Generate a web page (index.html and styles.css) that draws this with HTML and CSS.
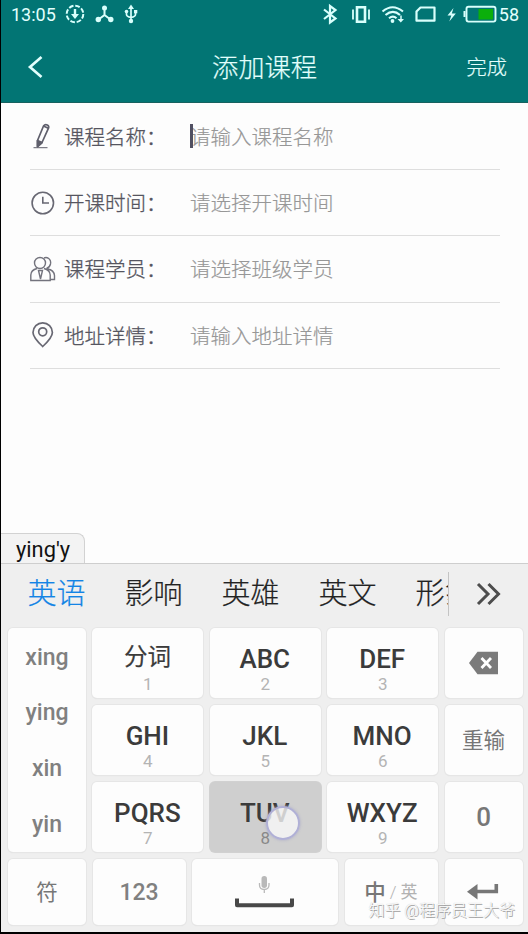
FILE: index.html
```html
<!DOCTYPE html>
<html lang="zh-CN">
<head>
<meta charset="utf-8">
<title>添加课程</title>
<link rel="stylesheet" href="styles.css">
</head>
<body>
<div class="phone">
  <header class="header">
    <div class="status">
      <span class="clock">13:05</span>
      <svg class="status-left" width="80" height="24" viewBox="62 3 80 24" fill="none" stroke="#d9fffc" stroke-width="2">
        <circle cx="75" cy="14" r="8.3" stroke-dasharray="4.7 1.82"/>
        <path d="M75 9v7" stroke-width="2.4"/><path d="M71 14h8l-4 5z" fill="#d9fffc" stroke="none"/>
        <path d="M104.500 8v7l-6 4.500M104.500 15l6 4.500"/>
        <g fill="#d9fffc" stroke="none"><circle cx="104.500" cy="8" r="2.500"/><circle cx="98.300" cy="19.500" r="2.700"/><circle cx="110.800" cy="19.500" r="2.700"/></g>
        <path d="M131 8v13M126.500 12v2.500q0 2 4.500 3q4.500-1 4.500-3V12" stroke-width="1.700"/>
        <g fill="#d9fffc" stroke="none"><path d="M128 9l3-4.500 3 4.500z"/><circle cx="131" cy="21" r="2.200"/><circle cx="126.500" cy="11.500" r="1.800"/><path d="M134 10h3.300v3.300H134z"/></g>
      </svg>
      <svg class="status-right" width="180" height="24" viewBox="320 3 180 24" fill="none" stroke="#d9fffc" stroke-width="2.200">
        <path d="M324 9.500l11.500 9-5.500 4V6l5.500 4-11.500 9"/>
        <path d="M357 7.200h8v14.500h-8z" stroke-width="2.600"/><path d="M353 9.500v10M369 9.500v10" stroke-width="1.800"/>
        <path d="M382.500 11.500q10-8.500 20.500 0M385.500 15q7.500-6.200 14.500 0M389 18.300q4-3.300 7.500 0" stroke-width="2.100"/>
        <circle cx="392.500" cy="21" r="1.900" fill="#d9fffc" stroke="none"/><path d="M401 15.500v4" stroke-width="1.500"/><path d="M397.500 19h6.500l-3.200 3.500z" fill="#d9fffc" stroke="none"/>
        <path d="M420.500 7.500h14v13.200h-18V11.500z" stroke-linejoin="round"/>
        <path d="M453.500 8l-6 7.500h3.800l-2 6 6.500-8h-4z" fill="#d9fffc" stroke="none"/>
        <rect x="466.500" y="6.800" width="29" height="14.800" rx="2" stroke-width="1.900"/><path d="M464.500 11v6" stroke-width="2"/><path d="M478.500 9h14.500v10.500h-14.500z" fill="#0baf0b" stroke="none"/>
      </svg>
      <span class="level">58</span>
    </div>
    <nav class="nav">
      <svg class="back" width="20" height="26" viewBox="0 0 20 26" fill="none" stroke="#e2fffd" stroke-width="2.700"><path d="M15.500 3L4 13l11.500 10"/></svg>
      <h1 class="title">添加课程</h1>
      <span class="done">完成</span>
    </nav>
  </header>

  <main class="form">
    <div class="row">
      <svg class="ico" width="28" height="28" viewBox="0 0 28 28" fill="none" stroke="#5f5f6c" stroke-width="1.700" stroke-linejoin="round"><path d="M8.500 18.500L14.500 4q1.500-2 3.800-1 2 1 1.200 3.200L13 20.500l-4.500 4z"/><path d="M8.500 18.500l4.500 2-4.500 4zM14.500 4l4.800 2.200" fill="#5f5f6c"/><path d="M4.500 25.700h14" stroke-width="1"/></svg>
      <span class="label">课程名称：</span><span class="field active">请输入课程名称</span>
    </div>
    <div class="row">
      <svg class="ico" width="28" height="28" viewBox="0 0 28 28" fill="none" stroke="#686873" stroke-width="1.600"><circle cx="12.800" cy="14" r="10.700"/><path d="M12.800 7.800V14H19"/></svg>
      <span class="label">开课时间：</span><span class="field">请选择开课时间</span>
    </div>
    <div class="row">
      <svg class="ico" width="28" height="28" viewBox="0 0 28 28" fill="none" stroke="#73737d" stroke-width="1.400"><circle cx="10" cy="8" r="5.500"/><path d="M14 3q2-1 4 0 3.300 2 2.500 6-.8 3.500-4 4.500M7 13.500Q1 15 .8 20v5.500h19.400V20q-.2-5-6.200-6.500M17.500 14q6.500 1 7 6.500v4h-4.300"/><path d="M8.500 15.500l2 8.500 2-8.500z"/></svg>
      <span class="label">课程学员：</span><span class="field">请选择班级学员</span>
    </div>
    <div class="row">
      <svg class="ico" width="28" height="28" viewBox="0 0 28 28" fill="none" stroke="#686873" stroke-width="1.700"><path d="M12.700 25.500Q3 16.500 3 11.500a9.700 9.700 0 0 1 19.400 0q0 5-9.700 14z"/><circle cx="12.700" cy="10.800" r="4"/></svg>
      <span class="label">地址详情：</span><span class="field">请输入地址详情</span>
    </div>
  </main>

  <div class="composing">ying'y</div>
  <section class="keyboard">
    <div class="candidates">
      <div class="words"><span class="chosen">英语</span><span>影响</span><span>英雄</span><span>英文</span><span>形象</span></div>
      <svg class="more" width="26" height="24" viewBox="0 0 26 24" fill="none" stroke="#4d4d4d" stroke-width="3"><path d="M2 2l10 10L2 22M12.500 2l10 10-10 10"/></svg>
    </div>
    <div class="keys">
      <div class="key pinyin"><span>xing</span><span>ying</span><span>xin</span><span>yin</span></div>
      <div class="key"><b class="cjk">分词</b><i>1</i></div>
      <div class="key"><b>ABC</b><i>2</i></div>
      <div class="key"><b>DEF</b><i>3</i></div>
      <div class="key side"><svg class="erase" width="30" height="24" viewBox="0 0 30 24"><path d="M0 12L8.500 .8H29v22.400H8.500z" fill="#7b7b7b"/><path d="M12.500 7l9.500 10M22 7l-9.500 10" stroke="#fff" stroke-width="2.800"/></svg></div>
      <div class="key"><b>GHI</b><i>4</i></div>
      <div class="key"><b>JKL</b><i>5</i></div>
      <div class="key"><b>MNO</b><i>6</i></div>
      <div class="key side reset">重输</div>
      <div class="key"><b>PQRS</b><i>7</i></div>
      <div class="key pressed"><b>TUV</b><i>8</i><span class="touch"></span></div>
      <div class="key"><b>WXYZ</b><i>9</i></div>
      <div class="key side zero">0</div>
    </div>
    <div class="bottom">
      <div class="key side symbol">符</div>
      <div class="key side num">123</div>
      <div class="key side"><svg class="space" width="60" height="34" viewBox="0 0 60 34"><rect x="26.500" y="0" width="5.500" height="12" rx="2.700" fill="#b9b9b9"/><path d="M24.500 7v2q0 4.500 4.700 4.500T34 9V7M29.300 13.500V17" fill="none" stroke="#b9b9b9" stroke-width="1.300"/><path d="M2 22.500v6.700h55v-6.700" fill="none" stroke="#484848" stroke-width="4" stroke-linejoin="round"/></svg></div>
      <div class="key side lang">中<span>/ <em>英</em></span></div>
      <div class="key side"><svg class="enter" width="32" height="18" viewBox="0 0 32 18"><path d="M29.300 1v7.500H8" fill="none" stroke="#777" stroke-width="3.600"/><path d="M0 8.700L10.500 1v15.500z" fill="#777"/></svg></div>
    </div>
  </section>
  <div class="watermark">知乎 @程序员王大爷</div>
</div>
</body>
</html>
```
FILE: styles.css
```css
* { box-sizing: border-box; }
body { margin: 0; background: #000; font-family: Roboto, "Noto Sans CJK SC", sans-serif; }
svg { display: block; flex: none; }
.phone { position: relative; width: 528px; height: 934px; border-left: 1px solid #000; border-bottom: 2px solid #000; background: #fdfdfd; display: flex; flex-direction: column; overflow: hidden; }
.header { height: 103px; flex: none; background: #027574; border-bottom: 1px solid #17615f; color: #e2fffd; }
.status { height: 30px; display: flex; align-items: center; padding: 0 9px 0 10px; }
.clock { width: 51px; font-size: 18px; line-height: 20px; padding-bottom: 1px; box-sizing: content-box; }
.status-right { margin-left: 178px; }
.level { font-size: 18px; line-height: 20px; margin-left: -1px; padding-bottom: 1px; }
.nav { height: 75px; display: grid; grid-template-columns: 1fr auto 1fr; align-items: center; padding: 0 21px 0 25px; }
.back { margin-top: -2px; }
.title { margin: 0 0 0 -4px; font-size: 26.300px; font-weight: 300; line-height: 38px; -webkit-text-stroke: .2px; }
.done { justify-self: end; font-size: 20.200px; font-weight: 300; line-height: 30px; -webkit-text-stroke: .2px; }
.form { padding: .7px 28px 0 29px; }
.row { height: 66.3px; border-bottom: 1px solid #dedede; display: flex; align-items: center; }
.ico { width: 28px; margin-right: 6px; }
.row:first-child .ico { transform: translateX(-1px); }
.label { width: 126px; font-size: 20.500px; color: #555560; font-weight: 300; white-space: nowrap; -webkit-text-stroke: .3px; }
.field { font-size: 20.500px; color: #979797; font-weight: 300; white-space: nowrap; -webkit-text-stroke: .2px; }
.label, .field { margin-top: -1px; }
.active { position: relative; }
.active::before { content: ""; position: absolute; left: 0; top: 3px; width: 3px; height: 24px; background: #505062; }
.composing { width: 84px; height: 30px; margin-top: auto; border: 1px solid #d2d2d2; border-left: 0; border-bottom: 0; border-radius: 0 8px 0 0; background: #f3f3f3; color: #111; padding-left: 15px; font-size: 21.800px; line-height: 31px; flex: none; }
.keyboard { height: 369px; flex: none; border-top: 1px solid #cecece; background: #efefef; padding-left: 7px; }
.candidates { height: 63.500px; display: flex; align-items: center; }
.words { width: 441px; height: 44px; border-right: 1px solid #c4c4c4; padding-left: 19.500px; display: flex; gap: 39px; align-items: center; overflow: hidden; white-space: nowrap; font-size: 29px; font-weight: 300; color: #222; line-height: 42px; margin-top: -3px; -webkit-text-stroke: .2px; }
.words span { flex: none; }
.words .chosen { color: #1384e5; }
.more { margin-left: 26.500px; margin-top: -4px; }
.keys { display: grid; grid-template-columns: 78px 111px 111px 111px 78px; grid-template-rows: repeat(3, 70px); gap: 7.300px 6.400px; }
.bottom { display: grid; grid-template-columns: 78px 93px 146px 93.400px 78px; grid-template-rows: 66px; column-gap: 6.550px; margin-top: 7.300px; }
.key { position: relative; display: flex; flex-direction: column; align-items: center; background: #fdfdfd; border-radius: 5px; box-shadow: 0 0 0 1px #e6e6e6, 0 1px 1px #dcdcdc; color: #3b3b3b; }
.key b { font-size: 26px; font-weight: 500; line-height: 30px; margin-top: 16px; padding-right: 1px; }
.key .cjk { font-size: 23.500px; font-weight: 400; margin-top: 14px; margin-bottom: 2px; -webkit-text-stroke: .2px; }
.key i { font-style: normal; font-size: 17px; line-height: 20px; color: #b4b4b4; }
.pinyin { grid-row: 1 / 4; justify-content: space-between; padding: 14px 0 12px; font-size: 23px; font-weight: 500; line-height: 31px; color: #808080; }
.side { justify-content: center; color: #777; font-size: 21.500px; }
.reset, .symbol { padding-bottom: 3px; }
.zero { font-size: 26px; font-weight: 500; }
.num { font-size: 23px; font-weight: 500; color: #808080; }
.erase { margin-top: 1px; }
.space { margin-top: 1px; }
.enter { margin-right: 2px; }
.lang { flex-direction: row; align-items: center; gap: 4px; font-weight: 500; padding: 0 1px 4px 0; }
.lang span { font-size: 17px; font-weight: 300; color: #b2b2b2; }
.lang em { font-style: normal; font-weight: 400; }
.pressed { background: #cfcfcf; box-shadow: 0 0 0 1px #d1d1d1; }
.pressed i { color: #888; }
.touch { position: absolute; left: 56px; top: 24px; width: 34px; height: 34px; border: 2px solid #b0b0d6; border-radius: 50%; background: rgba(249,249,249,.78); box-shadow: 0 0 3px #aaaac8; }
.watermark { position: absolute; right: 13px; bottom: 9px; font-size: 16px; line-height: 24px; font-weight: 300; color: #fdfdfd; text-shadow: 1px 1px 0 #a0a0a0, 0 0 1px #bbb; white-space: nowrap; }
```
